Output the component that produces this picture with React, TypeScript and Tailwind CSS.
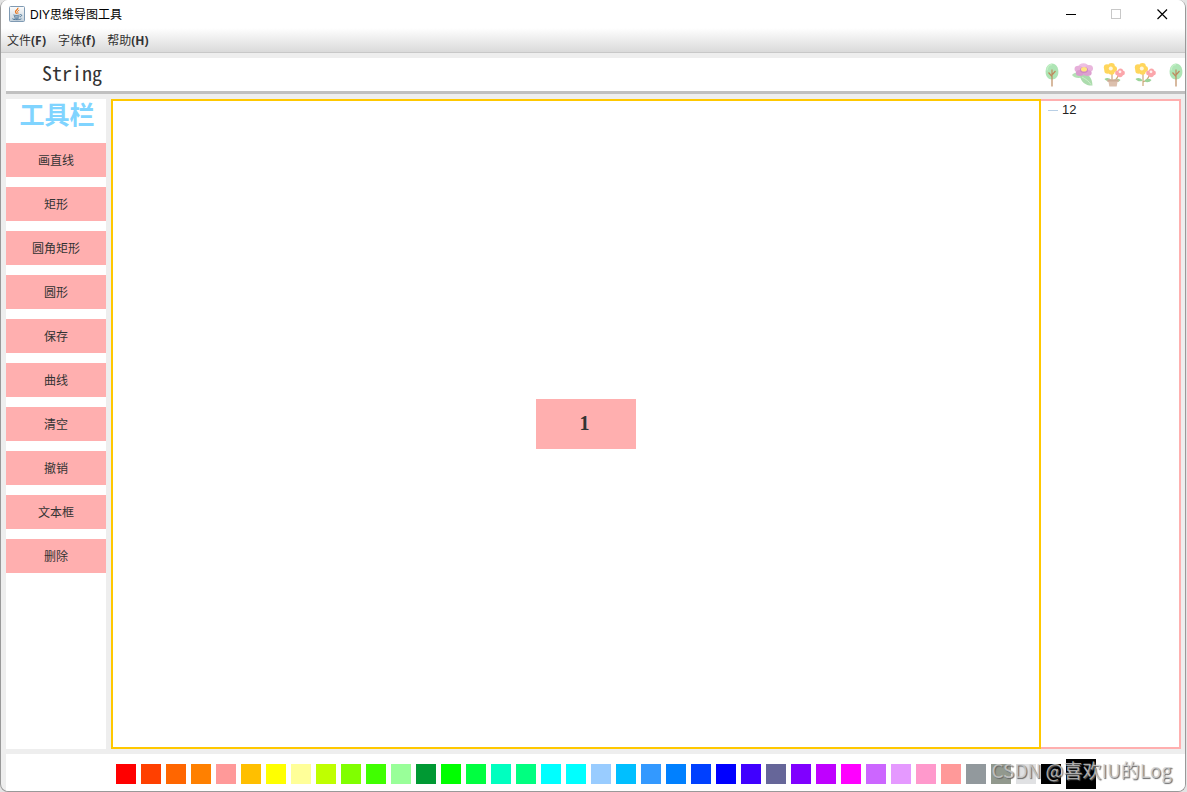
import type { ReactNode } from 'react';

const UI_FONT = 'font-["Liberation_Sans","Noto_Sans_CJK_SC",sans-serif]';

const menus = [
  { label: '文件', key: '(F)' },
  { label: '字体', key: '(f)' },
  { label: '帮助', key: '(H)' },
];

const tools = [
  '画直线',
  '矩形',
  '圆角矩形',
  '圆形',
  '保存',
  '曲线',
  '清空',
  '撤销',
  '文本框',
  '删除',
];

const palette = [
  '#ff0000', '#ff4000', '#ff6600', '#ff8000', '#ff9999', '#ffbf00', '#ffff00', '#ffff99',
  '#bfff00', '#80ff00', '#40ff00', '#99ff99', '#009933', '#00ff00', '#00ff40', '#00ffbf',
  '#00ff80', '#00ffff', '#00ffff', '#99ccff', '#00bfff', '#3399ff', '#0080ff', '#0040ff',
  '#0000ff', '#4000ff', '#666699', '#8000ff', '#bf00ff', '#ff00ff', '#cc66ff', '#e599ff',
  '#ff99cc', '#ff9999', '#92999d', '#92998e', '#e0e1e3', '#000000',
];

function JavaIcon() {
  return (
    <svg className="w-4 h-4 shrink-0" viewBox="0 0 16 16" fill="none">
      <defs>
        <linearGradient id="java-bg" x1="0" y1="0" x2="0" y2="1">
          <stop offset="0" stopColor="#fdfdfd" />
          <stop offset="1" stopColor="#c3d0da" />
        </linearGradient>
      </defs>
      <rect x="0.5" y="0.5" width="15" height="15" rx="1" fill="url(#java-bg)" stroke="#7f9ab3" />
      <path d="M8.8 1.8c.8 1.8-2.6 2.6-2.3 4.1.1.7.9 1.1 1.1 2" stroke="#e8781e" strokeWidth="1.3" />
      <path d="M10.2 4.2c-1.6.7-2.1 1.3-1.5 2.1.5.7.2 1.3-.3 1.7" stroke="#e8781e" strokeWidth="1" />
      <path d="M4.6 8.8c-.9.7 5 .9 6.1.1M5 10.6c1.4.6 4 .6 5.4 0M5.4 12c1.2.5 3.2.5 4.4 0" stroke="#4d7596" />
      <path d="M11.2 8.6c2-.4 2 1.6-.2 2.3M3.6 12.6c-1.2.9 6.8 1.7 8.8.2" stroke="#4d7596" />
    </svg>
  );
}

function TreeIcon() {
  return (
    <svg className="w-[26px] h-[26px]" viewBox="0 0 26 26" fill="none">
      <path d="M13 1.5c4 0 6.4 4 6.4 8.5 0 4.2-2.5 7.5-6.4 7.5s-6.4-3.3-6.4-7.5c0-4.5 2.4-8.5 6.4-8.5z" fill="#aee5b5" />
      <path d="M13 2.5c-3 0-4.8 3-5 6" stroke="#c3f0c6" strokeWidth="1.5" />
      <path d="M13 7.5v17M13 14.5l-3.5-4M13 13l3.5-4" stroke="#bd8a5e" strokeWidth="1.2" />
    </svg>
  );
}

function PurpleFlowerIcon() {
  return (
    <svg className="w-[26px] h-[26px]" viewBox="0 0 26 26">
      <path d="M12 12c-4-2.5-8-1.5-10 1 2 3 7 4 11 2z" fill="#b4e0b5" />
      <path d="M10 13.5c5-3 12-1.5 12.5 10-6 .5-12-3-12.5-10z" fill="#acdcad" />
      <path d="M12 15c4 2 7 4.5 9 7.5" stroke="#cdeecb" fill="none" />
      <ellipse cx="13.5" cy="4.5" rx="5" ry="3.2" fill="#edbfe2" />
      <ellipse cx="8.5" cy="7" rx="4" ry="3.2" fill="#e6afd9" />
      <ellipse cx="19" cy="6.5" rx="4" ry="3.4" fill="#e9b6dc" />
      <ellipse cx="10" cy="11" rx="4.2" ry="3" fill="#d99bcd" />
      <ellipse cx="17.5" cy="11" rx="4.2" ry="3" fill="#dda1d0" />
      <ellipse cx="14" cy="8" rx="4" ry="3" fill="#cf87c2" />
      <ellipse cx="14" cy="7.2" rx="3" ry="2.3" fill="#ffe680" />
    </svg>
  );
}

interface BlossomsProps {
  children?: ReactNode;
}

function Blossoms({ children }: BlossomsProps) {
  return (
    <svg className="w-[26px] h-[26px]" viewBox="0 0 26 26">
      <path d="M11 12v12M11 20c3-1 5-3 6.5-7" stroke="#cda878" strokeWidth="1.2" fill="none" />
      <path d="M10.5 18.5c-2-3-5-3-7-1.5 2 2.5 5 3 7 1.5z" fill="#9bd49a" />
      <path d="M12.5 19c1.5-2.5 4.5-3 7-1-2 2.5-5 3-7 1z" fill="#9bd49a" />
      <g fill="#ffd65c">
        <circle cx="6" cy="5.5" r="3.2" />
        <circle cx="10.5" cy="4.5" r="3.4" />
        <circle cx="13" cy="7" r="3" />
        <circle cx="10.5" cy="9.5" r="3.2" />
        <circle cx="6.5" cy="8.5" r="3.2" />
      </g>
      <circle cx="9.8" cy="6.5" r="2" fill="#fff6dc" />
      <g fill="#fba6ab">
        <circle cx="16.5" cy="11" r="2.4" />
        <circle cx="19.5" cy="9" r="2.6" />
        <circle cx="21.5" cy="11" r="2.4" />
        <circle cx="19" cy="12.5" r="2.8" />
      </g>
      <circle cx="19" cy="9.8" r="1.4" fill="#fff0ee" />
      {children}
    </svg>
  );
}

function PottedFlowerIcon() {
  return (
    <Blossoms>
      <path d="M6.5 17.5h11v2.5h-1l-.8 4.5h-7.4l-.8-4.5h-1z" fill="#dcc0ad" />
      <path d="M6.5 17.5h11v2h-11z" fill="#cbab96" />
    </Blossoms>
  );
}

const decorations = [
  { name: '树', icon: <TreeIcon /> },
  { name: '紫花', icon: <PurpleFlowerIcon /> },
  { name: '盆栽', icon: <PottedFlowerIcon /> },
  { name: '花束', icon: <Blossoms /> },
  { name: '小树', icon: <TreeIcon /> },
];

function TitleBar() {
  return (
    <header className="h-7 shrink-0 flex items-center pl-2 bg-white">
      <JavaIcon />
      <h1 className="ml-[5px] pt-0.5 text-xs text-black">DIY思维导图工具</h1>
      <div className="ml-auto flex h-full">
        <button aria-label="最小化" className="w-[46px] flex items-center justify-center">
          <svg className="w-[11px] h-[11px]" viewBox="0 0 11 11" stroke="#000">
            <path d="M0 5.5h10" />
          </svg>
        </button>
        <button aria-label="最大化" disabled className="w-[45px] flex items-center justify-center">
          <svg className="w-[11px] h-[11px]" viewBox="0 0 11 11" stroke="#c8c8c8" fill="none">
            <rect x="0.5" y="0.5" width="9" height="9" />
          </svg>
        </button>
        <button aria-label="关闭" className="w-[46px] flex items-center justify-center">
          <svg className="w-[11px] h-[11px]" viewBox="0 0 11 11" stroke="#000" strokeWidth="1.2">
            <path d="M.5.5l9.5 9.5M10 .5l-9.5 9.5" />
          </svg>
        </button>
      </div>
    </header>
  );
}

function MenuBar() {
  return (
    <nav className="h-[25px] shrink-0 flex items-center gap-3 pl-1.5 pt-0.5 bg-linear-to-b from-white to-[#dadada] border-b border-[#c8c8c8]">
      {menus.map((menu) => (
        <button key={menu.label} className="flex text-xs text-[#333]">
          <span>{menu.label}</span>
          <span className='font-["Noto_Sans",sans-serif] font-bold'>{menu.key}</span>
        </button>
      ))}
    </nav>
  );
}

function ToolBar() {
  return (
    <div className="h-9 shrink-0 flex items-center bg-white border-b-[3px] border-[#c0c0c0] overflow-hidden">
      <span className='ml-9 pb-1 text-xl leading-7 text-[#333] font-["Noto_Sans_Mono_CJK_SC","DejaVu_Sans_Mono",monospace]'>
        String
      </span>
      <div className="ml-auto -mr-1 flex gap-[5px]">
        {decorations.map((item) => (
          <button key={item.name} aria-label={item.name}>
            {item.icon}
          </button>
        ))}
      </div>
    </div>
  );
}

function ToolPanel() {
  return (
    <aside className="w-[100px] shrink-0 flex flex-col gap-[10px] bg-white">
      <h2 className="h-[34px] pl-0.5 text-center text-[25px] leading-8 font-bold text-[#80d4ff]">工具栏</h2>
      {tools.map((tool) => (
        <button key={tool} className="h-[34px] pt-0.5 shrink-0 bg-[#ffafaf] text-xs text-[#333]">
          {tool}
        </button>
      ))}
    </aside>
  );
}

function Canvas() {
  return (
    <main className="relative flex-1 bg-white border-2 border-[#ffc800]">
      {/* Root node of the mind map */}
      <div className='absolute left-[423px] top-[298px] w-[100px] h-[50px] pr-[3px] pb-0.5 flex items-center justify-center bg-[#ffafaf] text-xl font-bold text-[#333] font-["Liberation_Serif",serif]'>
        1
      </div>
    </main>
  );
}

function Outline() {
  return (
    <aside className="w-[140px] shrink-0 bg-white border-2 border-l-0 border-[#ffafaf]">
      <ul>
        <li className="flex items-center gap-1 pl-[7px] text-[13px] leading-[18px] text-[#222]">
          <span className="w-[10px] h-px bg-[#b8cfe5]" />
          12
        </li>
      </ul>
    </aside>
  );
}

function Palette() {
  return (
    <footer className="relative h-[37px] shrink-0 flex items-center gap-[5px] pl-[110px] pt-[3px] bg-white">
      {palette.map((color, index) => (
        <button
          key={index}
          aria-label={color}
          className="w-5 h-5 shrink-0"
          style={{ backgroundColor: color }}
        />
      ))}
      {/* Currently selected colour */}
      <div className="w-[30px] h-[30px] shrink-0 bg-black" />
      <span className='absolute right-[13px] top-0.5 text-[19px] leading-7 whitespace-nowrap text-[#d0d0d0]/80 [text-shadow:1px_1px_1px_#666] font-["Noto_Sans_CJK_SC",sans-serif]'>
        CSDN @喜欢IU的Log
      </span>
    </footer>
  );
}

export default function App() {
  return (
    <div className="h-screen pr-px bg-[#e4e4e4]">
      <div className={`h-full flex flex-col bg-[#eee] border border-t-0 border-[#999] rounded-lg overflow-hidden ${UI_FONT}`}>
        <TitleBar />
        <MenuBar />
        <div className="flex-1 min-h-0 flex flex-col gap-[5px] pl-[5px] pt-[5px]">
          <ToolBar />
          <div className="flex-1 min-h-0 flex gap-[5px] pr-1">
            <ToolPanel />
            <div className="flex-1 flex">
              <Canvas />
              <Outline />
            </div>
          </div>
          <Palette />
        </div>
      </div>
    </div>
  );
}
